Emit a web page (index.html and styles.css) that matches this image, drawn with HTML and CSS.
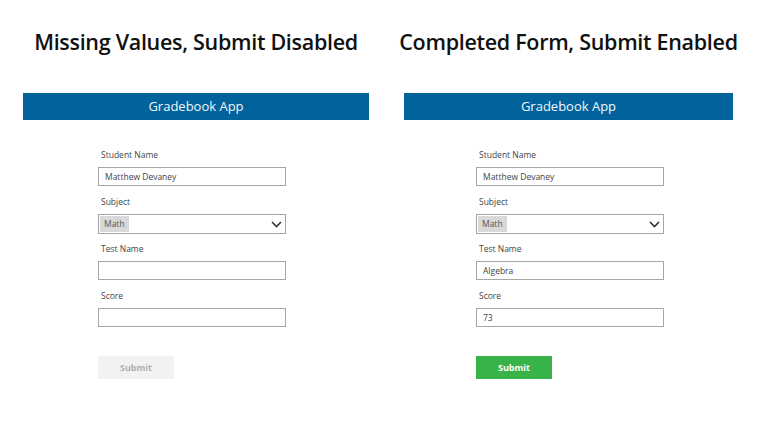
FILE: index.html
```html
<!DOCTYPE html>
<html lang="en">
<head>
<meta charset="utf-8">
<title>Gradebook App</title>
<link rel="stylesheet" href="styles.css">
</head>
<body>
<div class="page">
  <section class="panel panel-left">
    <h1 class="title"><span>Missing Values, Submit Disabled</span></h1>
    <div class="appbar">Gradebook App</div>
    <form class="form form-left">
      <div class="field">
        <label class="label">Student Name</label>
        <input class="input" type="text" value="Matthew Devaney">
      </div>
      <div class="field">
        <label class="label">Subject</label>
        <div class="select">
          <span class="chip">Math</span>
          <svg class="chevron" width="11" height="7" viewBox="0 0 11 7"><path d="M1 1 L5.5 5.5 L10 1" fill="none" stroke="#333" stroke-width="1.6"/></svg>
        </div>
      </div>
      <div class="field">
        <label class="label">Test Name</label>
        <input class="input" type="text" value="">
      </div>
      <div class="field">
        <label class="label">Score</label>
        <input class="input" type="text" value="">
      </div>
      <button class="submit submit-disabled" type="button" disabled>Submit</button>
    </form>
  </section>
  <section class="panel panel-right">
    <h1 class="title"><span>Completed Form, Submit Enabled</span></h1>
    <div class="appbar">Gradebook App</div>
    <form class="form form-right">
      <div class="field">
        <label class="label">Student Name</label>
        <input class="input" type="text" value="Matthew Devaney">
      </div>
      <div class="field">
        <label class="label">Subject</label>
        <div class="select">
          <span class="chip">Math</span>
          <svg class="chevron" width="11" height="7" viewBox="0 0 11 7"><path d="M1 1 L5.5 5.5 L10 1" fill="none" stroke="#333" stroke-width="1.6"/></svg>
        </div>
      </div>
      <div class="field">
        <label class="label">Test Name</label>
        <input class="input" type="text" value="Algebra">
      </div>
      <div class="field">
        <label class="label">Score</label>
        <input class="input" type="text" value="73">
      </div>
      <button class="submit submit-enabled" type="button">Submit</button>
    </form>
  </section>
</div>
</body>
</html>
```
FILE: styles.css
```css
* { box-sizing: border-box; }
html, body {
  margin: 0;
  padding: 0;
  background: #ffffff;
}
body {
  font-family: "Open Sans", "Noto Sans", "DejaVu Sans", sans-serif;
  color: #222;
}
.page {
  display: flex;
  padding: 0 35px 0 23px;
  gap: 35px;
}
.panel {
  display: flex;
  flex-direction: column;
}
.panel-left { width: 346px; }
.panel-right { width: 329px; }
.title {
  display: flex;
  justify-content: center;
  margin: 0;
  height: 93px;
  padding-top: 27px;
  font-size: 21.5px;
  font-weight: 600;
  line-height: 30px;
  white-space: nowrap;
  color: #111;
  letter-spacing: -0.3px;
}
.title span { flex: none; }
.appbar {
  height: 27px;
  background: #02629b;
  color: #f2f6fa;
  font-size: 13px;
  line-height: 27px;
  text-align: center;
}
.form {
  display: flex;
  flex-direction: column;
  padding-top: 29px;
  width: 188px;
}
.form-left { margin-left: 75px; }
.form-right { margin-left: 72px; }
.field {
  display: flex;
  flex-direction: column;
  height: 47px;
}
.label {
  display: block;
  height: 12px;
  line-height: 12px;
  font-size: 8.5px;
  color: #444;
  padding-left: 3px;
  margin-bottom: 6px;
}
.input {
  display: block;
  width: 188px;
  height: 19px;
  margin: 0;
  border: 1px solid #a6a6a6;
  border-radius: 0;
  padding: 0 6px;
  font-family: "Open Sans", "Noto Sans", sans-serif;
  font-size: 8.5px;
  color: #444;
  background: #fff;
  outline: none;
}
.select {
  display: flex;
  align-items: center;
  justify-content: space-between;
  width: 188px;
  height: 20px;
  border: 1px solid #a6a6a6;
  padding: 1px 3px 1px 1px;
  background: #fff;
}
.chip {
  display: block;
  height: 16px;
  line-height: 16px;
  padding: 0 4px;
  background: #d9d9d9;
  font-size: 8.5px;
  color: #555;
}
.chevron { display: block; }
.submit {
  margin-top: 19px;
  width: 76px;
  height: 23px;
  border: none;
  padding: 0;
  font-family: "Open Sans", "Noto Sans", sans-serif;
  font-size: 9px;
  font-weight: 700;
}
.submit-disabled {
  background: #f2f2f2;
  color: #b0b0b0;
}
.submit-enabled {
  background: #38b34a;
  color: #ffffff;
}
```
